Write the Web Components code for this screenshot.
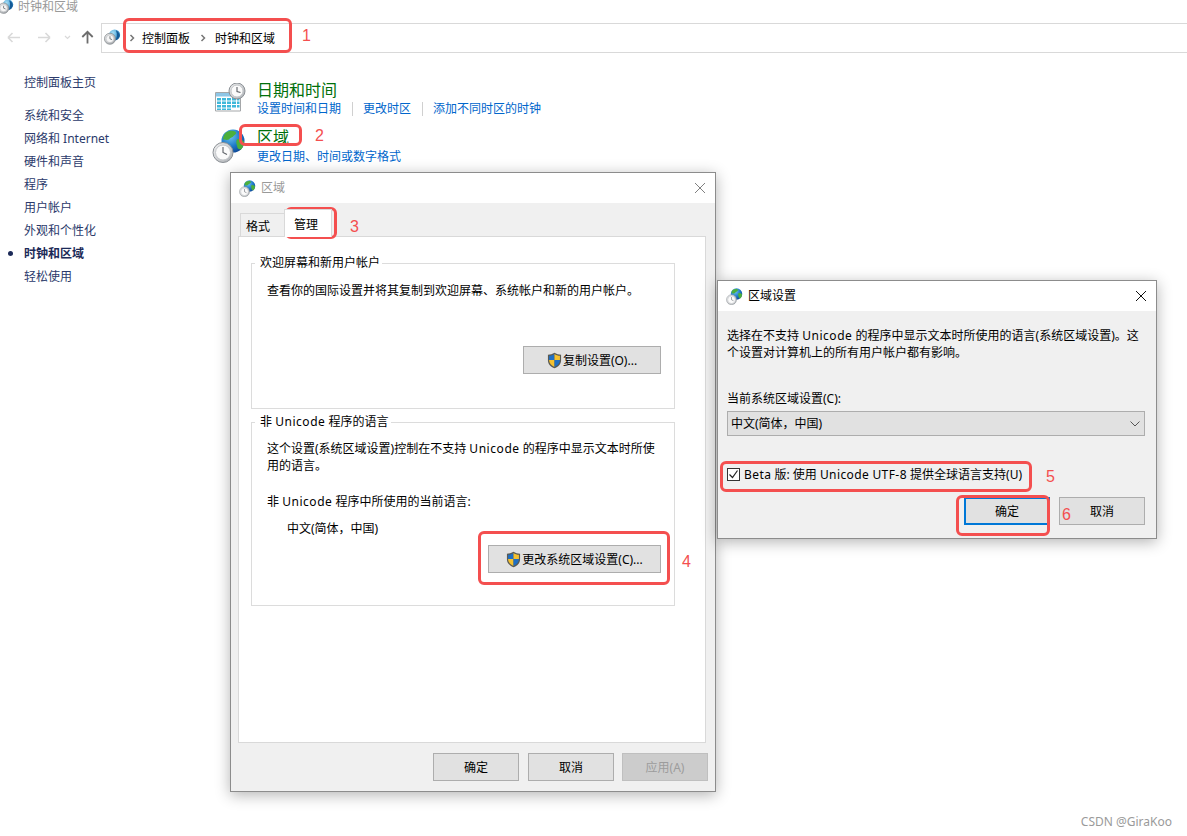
<!DOCTYPE html>
<html lang="zh-CN"><head><meta charset="utf-8"><title>时钟和区域</title>
<style>
html,body{margin:0;padding:0;background:#fff}
body{width:1187px;height:836px;overflow:hidden;font:12px/17px "Noto Sans","Noto Sans CJK SC",sans-serif;color:#000}
</style></head><body>
<cp-page>
  <cp-titlebar>时钟和区域</cp-titlebar>
  <cp-address></cp-address>
  <cp-main>
    <cp-sidebar slot="side"></cp-sidebar>
    <cp-category slot="main" icon="calendar" title-text="日期和时间">
      <a>设置时间和日期</a><i></i><a>更改时区</a><i></i><a>添加不同时区的时钟</a>
    </cp-category>
    <cp-category slot="main" icon="globe" title-text="区域" class="second">
      <a>更改日期、时间或数字格式</a>
    </cp-category>
  </cp-main>

  <cp-dialog style="left:230px;top:172px;width:486px;height:620px" title-text="区域" muted>
    <cp-region-panel></cp-region-panel>
  </cp-dialog>
  <cp-dialog style="left:717px;top:280px;width:440px;height:259px" title-text="区域设置">
    <cp-locale-panel></cp-locale-panel>
  </cp-dialog>

  <cp-mark style="left:123px;top:18px;width:169px;height:35px"></cp-mark>
  <cp-mark style="left:239px;top:124px;width:63px;height:22px"></cp-mark>
  <cp-mark style="left:285px;top:207px;width:52px;height:32px"></cp-mark>
  <cp-mark style="left:478px;top:531px;width:192px;height:54px"></cp-mark>
  <cp-mark style="left:720px;top:461px;width:312px;height:31px"></cp-mark>
  <cp-mark style="left:956px;top:495px;width:94px;height:41px"></cp-mark>
  <cp-num style="left:302px;top:26px">1</cp-num>
  <cp-num style="left:315px;top:126px">2</cp-num>
  <cp-num style="left:350px;top:217px">3</cp-num>
  <cp-num style="left:682px;top:552px">4</cp-num>
  <cp-num style="left:1046px;top:467px">5</cp-num>
  <cp-num style="left:1062px;top:505px">6</cp-num>
  <cp-watermark>CSDN @GiraKoo</cp-watermark>
</cp-page>

<script>
const FONT = '"Noto Sans","Noto Sans CJK SC",sans-serif';
function def(name, css, html){
  customElements.define(name, class extends HTMLElement{
    constructor(){super();
      const r=this.attachShadow({mode:'open'});
      r.innerHTML='<style>'+css+'</style>'+(typeof html==='function'?html(this):html);
    }
  });
}
const ICONS = {
 globe:`<svg viewBox="0 0 34 34" width="100%" height="100%" style="display:block">
  <defs><radialGradient id="g" cx=".38" cy=".3" r=".8"><stop offset="0" stop-color="#6fc4ef"/><stop offset=".55" stop-color="#1d78c8"/><stop offset="1" stop-color="#0d3f8c"/></radialGradient>
  <linearGradient id="c" x1="0" y1="0" x2="1" y2="1"><stop offset="0" stop-color="#f4f4f4"/><stop offset="1" stop-color="#a9adb2"/></linearGradient></defs>
  <circle cx="21" cy="12" r="11.500" fill="url(#g)"/>
  <path d="M14 3.500c3-2 7-2 9-1 2 1 1 3-1 4-1 2-4 2-5 4-2 1-5 0-6 0 0-3 1-5 3-7zM25 10.500c2-1 5 0 7 2 0 3-1 6-3 8-2 0-4-1-4-4-1-2-1-5 0-6z" fill="#4caf3c"/>
  <circle cx="11" cy="23.500" r="10" fill="url(#c)" stroke="#8b9095"/>
  <circle cx="11" cy="23.500" r="7.500" fill="#fbfbfb" stroke="#c4c7ca"/>
  <path d="M11 18v5.500l4 2" fill="none" stroke="#5c6066" stroke-width="1.100"/></svg>`,
 addr:`<svg viewBox="0 0 20 20" width="100%" height="100%" style="display:block">
  <defs><radialGradient id="a" cx=".35" cy=".3" r=".85"><stop offset="0" stop-color="#a5dcf3"/><stop offset=".6" stop-color="#4aa3d8"/><stop offset="1" stop-color="#1a5f9e"/></radialGradient>
  <linearGradient id="b" x1="0" y1="0" x2="1" y2="1"><stop offset="0" stop-color="#efefef"/><stop offset="1" stop-color="#9a9ea3"/></linearGradient></defs>
  <circle cx="12.500" cy="7" r="6.500" fill="url(#a)"/>
  <path d="M14 1.500c3 1.500 4.500 4 4.500 6.500-1 3-3 5-5 5.500 1.500-3 2.500-7 .5-12z" fill="#145a96"/>
  <circle cx="7" cy="11.500" r="6.500" fill="url(#b)" stroke="#7f8488" stroke-width=".8"/>
  <circle cx="7" cy="11.500" r="4.500" fill="#f6f6f6" stroke="#b5b8bb" stroke-width=".6"/>
  <path d="M7 8.500v3l2.500 1" fill="none" stroke="#55595e" stroke-width=".9"/></svg>`,
 calendar:`<svg viewBox="0 0 34 32" width="100%" height="100%" style="display:block">
  <defs><linearGradient id="k" x1="0" y1="0" x2="1" y2="1"><stop offset="0" stop-color="#f2f2f2"/><stop offset="1" stop-color="#a9adb2"/></linearGradient></defs>
  <path d="M1.500 9.500h25v18.500h-25z" fill="#fff" stroke="#a4a7a9"/>
  <path d="M2 10h24v3.500H2z" fill="#8ec6e6"/>
  <g fill="#3fb8da">
   <path d="M3 15h4v2.500H3zM8 15h4v2.500H8zM13 15h4v2.500h-4zM18 15h4v2.500h-4zM23 15h2.500v2.500H23zM3 18.500h4V21H3zM8 18.500h4V21H8zM13 18.500h4V21h-4zM18 18.500h4V21h-4zM23 18.500h2.500V21H23zM3 22h4v2.500H3zM8 22h4v2.500H8zM13 22h4v2.500h-4zM18 22h4v2.500h-4zM23 22h2.500v2.500H23zM3 25.500h4v1.500H3zM8 25.500h4v1.500H8zM13 25.500h4v1.500h-4z"/></g>
  <circle cx="23" cy="8" r="8" fill="url(#k)" stroke="#8b9095"/>
  <circle cx="23" cy="8" r="6" fill="#fbfbfb" stroke="#c4c7ca"/>
  <path d="M23 4v4.500l3.500 1" fill="none" stroke="#5c6066" stroke-width="1.100"/></svg>`,
 shield:`<svg viewBox="0 0 16 18" width="100%" height="100%" style="display:block">
  <path d="M8 .7C6 2 3.500 2.700 1 2.900v6c0 3.800 3 6.800 7 8.400 4-1.600 7-4.600 7-8.400v-6C12.500 2.700 10 2 8 .7z" fill="#5a5a52"/>
  <path d="M8 2v6.500H2.200V4c2.200-.2 4.200-.9 5.800-2z" fill="#1f6fc4"/>
  <path d="M8 2c1.600 1.100 3.600 1.800 5.800 2v4.500H8z" fill="#f5c12e"/>
  <path d="M2.200 8.500H8v7.400c-3.200-1.400-5.800-4-5.800-7.400z" fill="#f5c12e"/>
  <path d="M8 8.500h5.800c0 3.400-2.600 6-5.800 7.400z" fill="#1f6fc4"/></svg>`
};
def('cp-icon',':host{display:inline-block;flex:none}', h=>ICONS[h.getAttribute('name')]);

def('cp-page',':host{display:block;position:relative;width:1187px;height:836px;overflow:hidden}','<slot></slot>');

def('cp-titlebar',`:host{display:flex;height:23px;overflow:hidden;color:#999;font:12px/14px ${FONT};box-sizing:border-box}
 cp-icon{width:16px;height:16px;margin:-1px 4px 0 -2px}`,
 `<cp-icon name="addr"></cp-icon><slot></slot>`);

def('cp-address',`:host{display:flex;align-items:center;height:30px;font:12px/17px ${FONT};color:#000}
 .nav{width:101px;flex:none;display:flex;align-items:center;height:100%}
 .box{flex:1;align-self:stretch;border:solid #d9d9d9;border-width:1px 0 1px 1px;display:flex;align-items:center;padding-left:2px}
 .chev{flex:none;display:flex;justify-content:center}
 span{white-space:nowrap}
 svg{display:block}`,
 `<div class="nav">
   <svg width="101" height="30" viewBox="0 0 101 30">
    <path d="M8 14.500h12M8 14.500l4.500-4.500M8 14.500l4.500 4.500" fill="none" stroke="#d9d9d9" stroke-width="1.600"/>
    <path d="M50 14.500H38M50 14.500l-4.500-4.500M50 14.500l-4.500 4.500" fill="none" stroke="#d9d9d9" stroke-width="1.600"/>
    <path d="M65 13l2.500 2.500 2.500-2.500" fill="none" stroke="#d9d9d9" stroke-width="1.200"/>
    <path d="M87.500 20.500V9M82.300 14l5.200-5.200 5.200 5.200" fill="none" stroke="#6d6d6d" stroke-width="1.800"/>
   </svg></div>
  <div class="box">
   <cp-icon name="addr" style="width:17px;height:17px;margin-top:-2px"></cp-icon>
   <div class="chev" style="width:21px"><svg width="6" height="8"><path d="M1.500 1l3 3-3 3" fill="none" stroke="#777" stroke-width="1.500"/></svg></div>
   <span>控制面板</span>
   <div class="chev" style="width:25px"><svg width="6" height="8"><path d="M1.500 1l3 3-3 3" fill="none" stroke="#777" stroke-width="1.500"/></svg></div>
   <span>时钟和区域</span>
  </div>`);

def('cp-main',`:host{display:flex;height:783px}
 .s{width:214px;flex:none}.m{flex:1;padding-top:29px}`,
 `<div class="s"><slot name="side"></slot></div><div class="m"><slot name="main"></slot></div>`);

def('cp-sidebar',`:host{display:block;padding:18px 0 0 24px;font:12px/23px ${FONT};color:#2b3a6b}
 div{height:23px;white-space:nowrap;position:relative}
 .home{margin-bottom:10px}
 .on{font-weight:700;color:#1c2a58}
 .on::before{content:"";position:absolute;left:-16px;top:9px;width:5px;height:5px;border-radius:50%;background:#1c2a58}`,
 `<div class="home">控制面板主页</div><div>系统和安全</div><div>网络和 Internet</div><div>硬件和声音</div><div>程序</div><div>用户帐户</div><div>外观和个性化</div><div class="on">时钟和区域</div><div>轻松使用</div>`);

def('cp-category',`:host{display:flex;height:46px;font:12px/17px ${FONT}}
 :host(.second){margin-top:1px}
 .ic{width:34px;height:32px;margin:1px 9px 0 0}
 :host([icon=globe]) .ic{height:34px;margin:0 11px 0 -2px}
 .t{font:16px/20px ${FONT};color:#00700a;height:20px;margin-top:-2px}
 .l{display:flex;align-items:center;color:#0066cc;height:17px}
 :host(.second) .l{margin-top:1px}
 ::slotted(a){white-space:nowrap}
 ::slotted(i){width:1px;height:14px;background:#d0d0d0;margin:0 10px 0 11px}`,
 h=>`<cp-icon class="ic" name="${h.getAttribute('icon')}"></cp-icon><div><div class="t">${h.getAttribute('title-text')}</div><div class="l"><slot></slot></div></div>`);

def('cp-dialog',`:host{position:absolute;display:flex;flex-direction:column;box-sizing:border-box;background:#f0f0f0;border:1px solid #8c8c8c;box-shadow:0 3px 14px rgba(0,0,0,.3);font:12px/17px ${FONT}}
 .bar{height:30px;flex:none;background:#fff;display:flex;align-items:center;padding-left:8px;color:#000}
 :host([muted]) .bar{color:#999}
 :host([muted]) svg.x1 path{stroke:#808080}
 .bar span{margin:-2px 0 0 5px;flex:1}
 .x{width:30px;display:flex;justify-content:center}
 .body{flex:1;min-height:0}`,
 h=>`<div class="bar"><cp-icon name="globe" style="width:17px;height:17px"></cp-icon><span>${h.getAttribute('title-text')}</span><div class="x"><svg class="x1" width="12" height="12"><path d="M1 1l10 10M11 1L1 11" stroke="#111" fill="none"/></svg></div></div><div class="body"><slot></slot></div>`);

def('cp-btn',`:host{display:inline-flex;align-items:center;justify-content:center;box-sizing:border-box;height:28px;background:#e1e1e1;border:1px solid #adadad;font:12px/17px ${FONT};color:#000;white-space:nowrap}
 :host([disabled]){background:#ccc;border-color:#bfbfbf;color:#9c9c9c}
 :host([primary]){border:2px solid #0078d7}
 cp-icon{width:15px;height:17px;margin-right:1px}`,
 h=>(h.hasAttribute('shield')?'<cp-icon name="shield"></cp-icon>':'')+'<slot></slot>');

def('cp-group',`:host{display:block}
 fieldset{margin:0;box-sizing:border-box;height:100%;border:1px solid #dcdcdc;padding:10px 13px 0 15px;min-width:0}
 legend{margin-left:-12px;padding:0 2px 0 5px;font:12px/16px ${FONT};white-space:nowrap}
 b{font-weight:400;letter-spacing:.55px}`,
 h=>`<fieldset><legend>${h.getAttribute('label').replace('Unicode','<b>Unicode</b>')}</legend><slot></slot></fieldset>`);

def('cp-region-panel',`:host{display:flex;flex-direction:column;height:100%;box-sizing:border-box;padding:10px 7px 0 7px;font:12px/17px ${FONT}}
 .tabs{display:flex;height:23px;flex:none;align-items:flex-end;padding-left:2px;position:relative;z-index:1}
 .tab{box-sizing:border-box;height:23px;border:1px solid #d9d9d9;border-bottom:0;width:45px;padding:4px 0 0 5px;background:#f0f0f0}
 .tab.on{background:#fff;height:28px;width:48px;margin-left:-1px;padding:6px 0 0 9px;margin-bottom:-1px;border-color:#d9d9d9}
 .panel{box-sizing:border-box;flex:none;width:468px;height:507px;border:1px solid #d9d9d9;background:#fff;padding:18px 0 0 12px}
 cp-group{width:424px}
 .g1{height:154px}.g2{height:192px;margin-top:5px}
 p{margin:0;white-space:nowrap}
 b{font-weight:400;letter-spacing:.55px}
 .r{display:flex;justify-content:flex-end}
 .foot{display:flex;justify-content:flex-end;padding:10px 0 0;gap:9px}
 .foot cp-btn{width:86px}
 .foot cp-btn:last-child{margin-left:-1px}`,
 `<div class="tabs"><div class="tab">格式</div><div class="tab on">管理</div></div>
  <div class="panel">
   <cp-group class="g1" label="欢迎屏幕和新用户帐户">
     <p style="margin-top:1px">查看你的国际设置并将其复制到欢迎屏幕、系统帐户和新的用户帐户。</p>
     <div class="r" style="margin-top:47px"><cp-btn shield style="width:138px">复制设置(O)...</cp-btn></div>
   </cp-group>
   <cp-group class="g2" label="非 Unicode 程序的语言">
     <p>这个设置(系统区域设置)控制在不支持 <b>Unicode</b> 的程序中显示文本时所使</p>
     <p>用的语言。</p>
     <p style="margin-top:19px">非 <b>Unicode</b> 程序中所使用的当前语言:</p>
     <p style="margin:10px 0 0 20px">中文(简体，中国)</p>
     <div class="r" style="margin-top:8px"><cp-btn shield style="width:173px">更改系统区域设置(C)...</cp-btn></div>
   </cp-group>
  </div>
  <div class="foot"><cp-btn>确定</cp-btn><cp-btn>取消</cp-btn><cp-btn disabled>应用(A)</cp-btn></div>`);

def('cp-locale-panel',`:host{display:block;padding:16px 11px 0 9px;font:12px/17px ${FONT}}
 p{margin:0;white-space:nowrap}
 b{font-weight:400;letter-spacing:.55px}
 .chk b{letter-spacing:.42px}
 .sel{box-sizing:border-box;height:25px;margin-top:4px;background:#e1e1e1;border:1px solid #adadad;display:flex;align-items:center;justify-content:space-between;padding:0 4px 0 3px}
 .chk{display:flex;align-items:center;margin-top:30px;height:17px;gap:4px}
 .box{width:13px;height:13px;box-sizing:border-box;border:1px solid #333;background:#fff;display:flex}
 .foot{display:flex;justify-content:flex-end;gap:9px;margin-top:14px}
 .foot cp-btn{width:86px}`,
 `<p>选择在不支持 <b>Unicode</b> 的程序中显示文本时所使用的语言(系统区域设置)。这</p>
  <p>个设置对计算机上的所有用户帐户都有影响。</p>
  <p style="margin-top:29px">当前系统区域设置(C):</p>
  <div class="sel"><span>中文(简体，中国)</span><svg width="10" height="6"><path d="M.5.5L5 5 9.500.5" fill="none" stroke="#555"/></svg></div>
  <div class="chk"><div class="box"><svg width="11" height="11"><path d="M1.500 5.500l3 3 5-7" fill="none" stroke="#222" stroke-width="1.200"/></svg></div><span><b>Beta</b> 版: 使用 <b>Unicode</b> <b>UTF-8</b> 提供全球语言支持(U)</span></div>
  <div class="foot"><cp-btn primary>确定</cp-btn><cp-btn>取消</cp-btn></div>`);

def('cp-mark',':host{position:absolute;box-sizing:border-box;border:3px solid #f44f4f;border-radius:6px}','');
def('cp-num',`:host{position:absolute;color:#f44f4f;font:16px/20px "Liberation Sans",sans-serif}`,'<slot></slot>');
def('cp-watermark',`:host{position:absolute;right:15px;bottom:6px;color:#9a9a9a;font:12px/16px ${FONT}}`,'<slot></slot>');
</script>
</body></html>
